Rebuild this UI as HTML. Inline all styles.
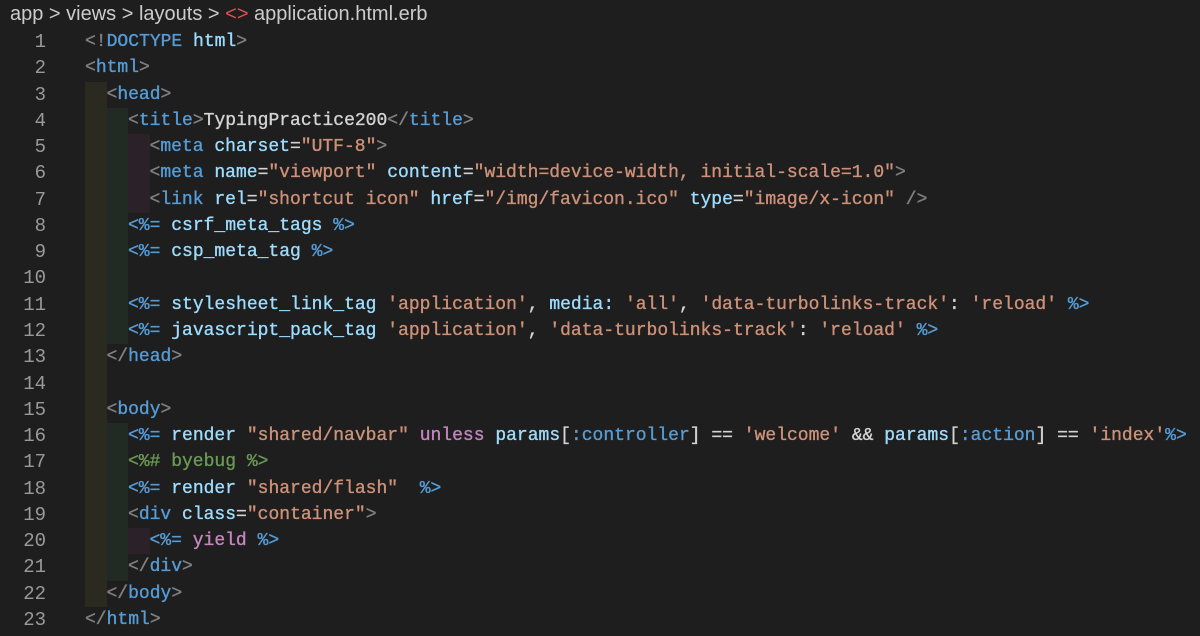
<!DOCTYPE html>
<html><head><meta charset="utf-8"><style>
body{margin:0;width:1200px;height:636px;background:#1e1e1e;overflow:hidden;font-family:"Liberation Mono",monospace;}
.bc{position:absolute;left:10px;top:3px;font:20px "Liberation Sans",sans-serif;color:#cccccc;white-space:pre;}
.bc .ic{color:#e05252;}
.ln{position:absolute;left:0;width:46px;text-align:right;color:#9a9a9a;font-size:19px;}
.code{position:absolute;left:85px;white-space:pre;font-size:18px;color:#d4d4d4;-webkit-text-stroke:0.35px;}
.ln,.code{height:26.27px;line-height:26.27px;}
.g{position:absolute;height:26.27px;width:21.5px;}
.g1{background:#2a2a21}.g2{background:#212a23}.g3{background:#2b2229}
.p{color:#808080}.t{color:#569cd6}.a{color:#9cdcfe}.s{color:#ce9178}.k{color:#c586c0}.c{color:#6a9955}.m{color:#9cdcfe}.w{color:#d4d4d4}
</style></head><body>
<div class="bc">app &gt; views &gt; layouts &gt; <span class="ic">&lt;&gt;</span> application.html.erb</div>
<div id="c"></div>
<script>
(function(){
var L=[
[0,[],'<span class="p">&lt;!</span><span class="t">DOCTYPE</span> <span class="a">html</span><span class="p">&gt;</span>'],
[0,[],'<span class="p">&lt;</span><span class="t">html</span><span class="p">&gt;</span>'],
[1,[1],'<span class="p">&lt;</span><span class="t">head</span><span class="p">&gt;</span>'],
[2,[1,2],'<span class="p">&lt;</span><span class="t">title</span><span class="p">&gt;</span><span class="w">TypingPractice200</span><span class="p">&lt;/</span><span class="t">title</span><span class="p">&gt;</span>'],
[3,[1,2,3],'<span class="p">&lt;</span><span class="t">meta</span> <span class="a">charset</span>=<span class="s">"UTF-8"</span><span class="p">&gt;</span>'],
[3,[1,2,3],'<span class="p">&lt;</span><span class="t">meta</span> <span class="a">name</span>=<span class="s">"viewport"</span> <span class="a">content</span>=<span class="s">"width=device-width, initial-scale=1.0"</span><span class="p">&gt;</span>'],
[3,[1,2,3],'<span class="p">&lt;</span><span class="t">link</span> <span class="a">rel</span>=<span class="s">"shortcut icon"</span> <span class="a">href</span>=<span class="s">"/img/favicon.ico"</span> <span class="a">type</span>=<span class="s">"image/x-icon"</span> <span class="p">/&gt;</span>'],
[2,[1,2],'<span class="t">&lt;%=</span> <span class="m">csrf_meta_tags</span> <span class="t">%&gt;</span>'],
[2,[1,2],'<span class="t">&lt;%=</span> <span class="m">csp_meta_tag</span> <span class="t">%&gt;</span>'],
[0,[1,2],''],
[2,[1,2],'<span class="t">&lt;%=</span> <span class="m">stylesheet_link_tag</span> <span class="s">\'application\'</span>, <span class="m">media:</span> <span class="s">\'all\'</span>, <span class="s">\'data-turbolinks-track\'</span>: <span class="s">\'reload\'</span> <span class="t">%&gt;</span>'],
[2,[1,2],'<span class="t">&lt;%=</span> <span class="m">javascript_pack_tag</span> <span class="s">\'application\'</span>, <span class="s">\'data-turbolinks-track\'</span>: <span class="s">\'reload\'</span> <span class="t">%&gt;</span>'],
[1,[1],'<span class="p">&lt;/</span><span class="t">head</span><span class="p">&gt;</span>'],
[0,[1],''],
[1,[1],'<span class="p">&lt;</span><span class="t">body</span><span class="p">&gt;</span>'],
[2,[1,2],'<span class="t">&lt;%=</span> <span class="m">render</span> <span class="s">"shared/navbar"</span> <span class="k">unless</span> <span class="m">params</span>[<span class="t">:controller</span>] <span class="w">==</span> <span class="s">\'welcome\'</span> <span class="w">&amp;&amp;</span> <span class="m">params</span>[<span class="t">:action</span>] <span class="w">==</span> <span class="s">\'index\'</span><span class="t">%&gt;</span>'],
[2,[1,2],'<span class="c">&lt;%# byebug %&gt;</span>'],
[2,[1,2],'<span class="t">&lt;%=</span> <span class="m">render</span> <span class="s">"shared/flash"</span>  <span class="t">%&gt;</span>'],
[2,[1,2],'<span class="p">&lt;</span><span class="t">div</span> <span class="a">class</span>=<span class="s">"container"</span><span class="p">&gt;</span>'],
[3,[1,2,3],'<span class="t">&lt;%=</span> <span class="k">yield</span> <span class="t">%&gt;</span>'],
[2,[1,2],'<span class="p">&lt;/</span><span class="t">div</span><span class="p">&gt;</span>'],
[1,[1],'<span class="p">&lt;/</span><span class="t">body</span><span class="p">&gt;</span>'],
[0,[],'<span class="p">&lt;/</span><span class="t">html</span><span class="p">&gt;</span>']
];
var h='';
for(var i=0;i<L.length;i++){var yy=29+i*26.27;
h+='<div class="ln" style="top:'+yy+'px">'+(i+1)+'</div>';
L[i][1].forEach(function(g){h+='<div class="g g'+g+'" style="top:'+yy+'px;left:'+(85+(g-1)*21.5)+'px"></div>';});
h+='<div class="code" style="top:'+yy+'px;left:'+(85+L[i][0]*21.5)+'px">'+L[i][2]+'</div>';}
document.getElementById('c').innerHTML=h;
})();
</script>
</body></html>
